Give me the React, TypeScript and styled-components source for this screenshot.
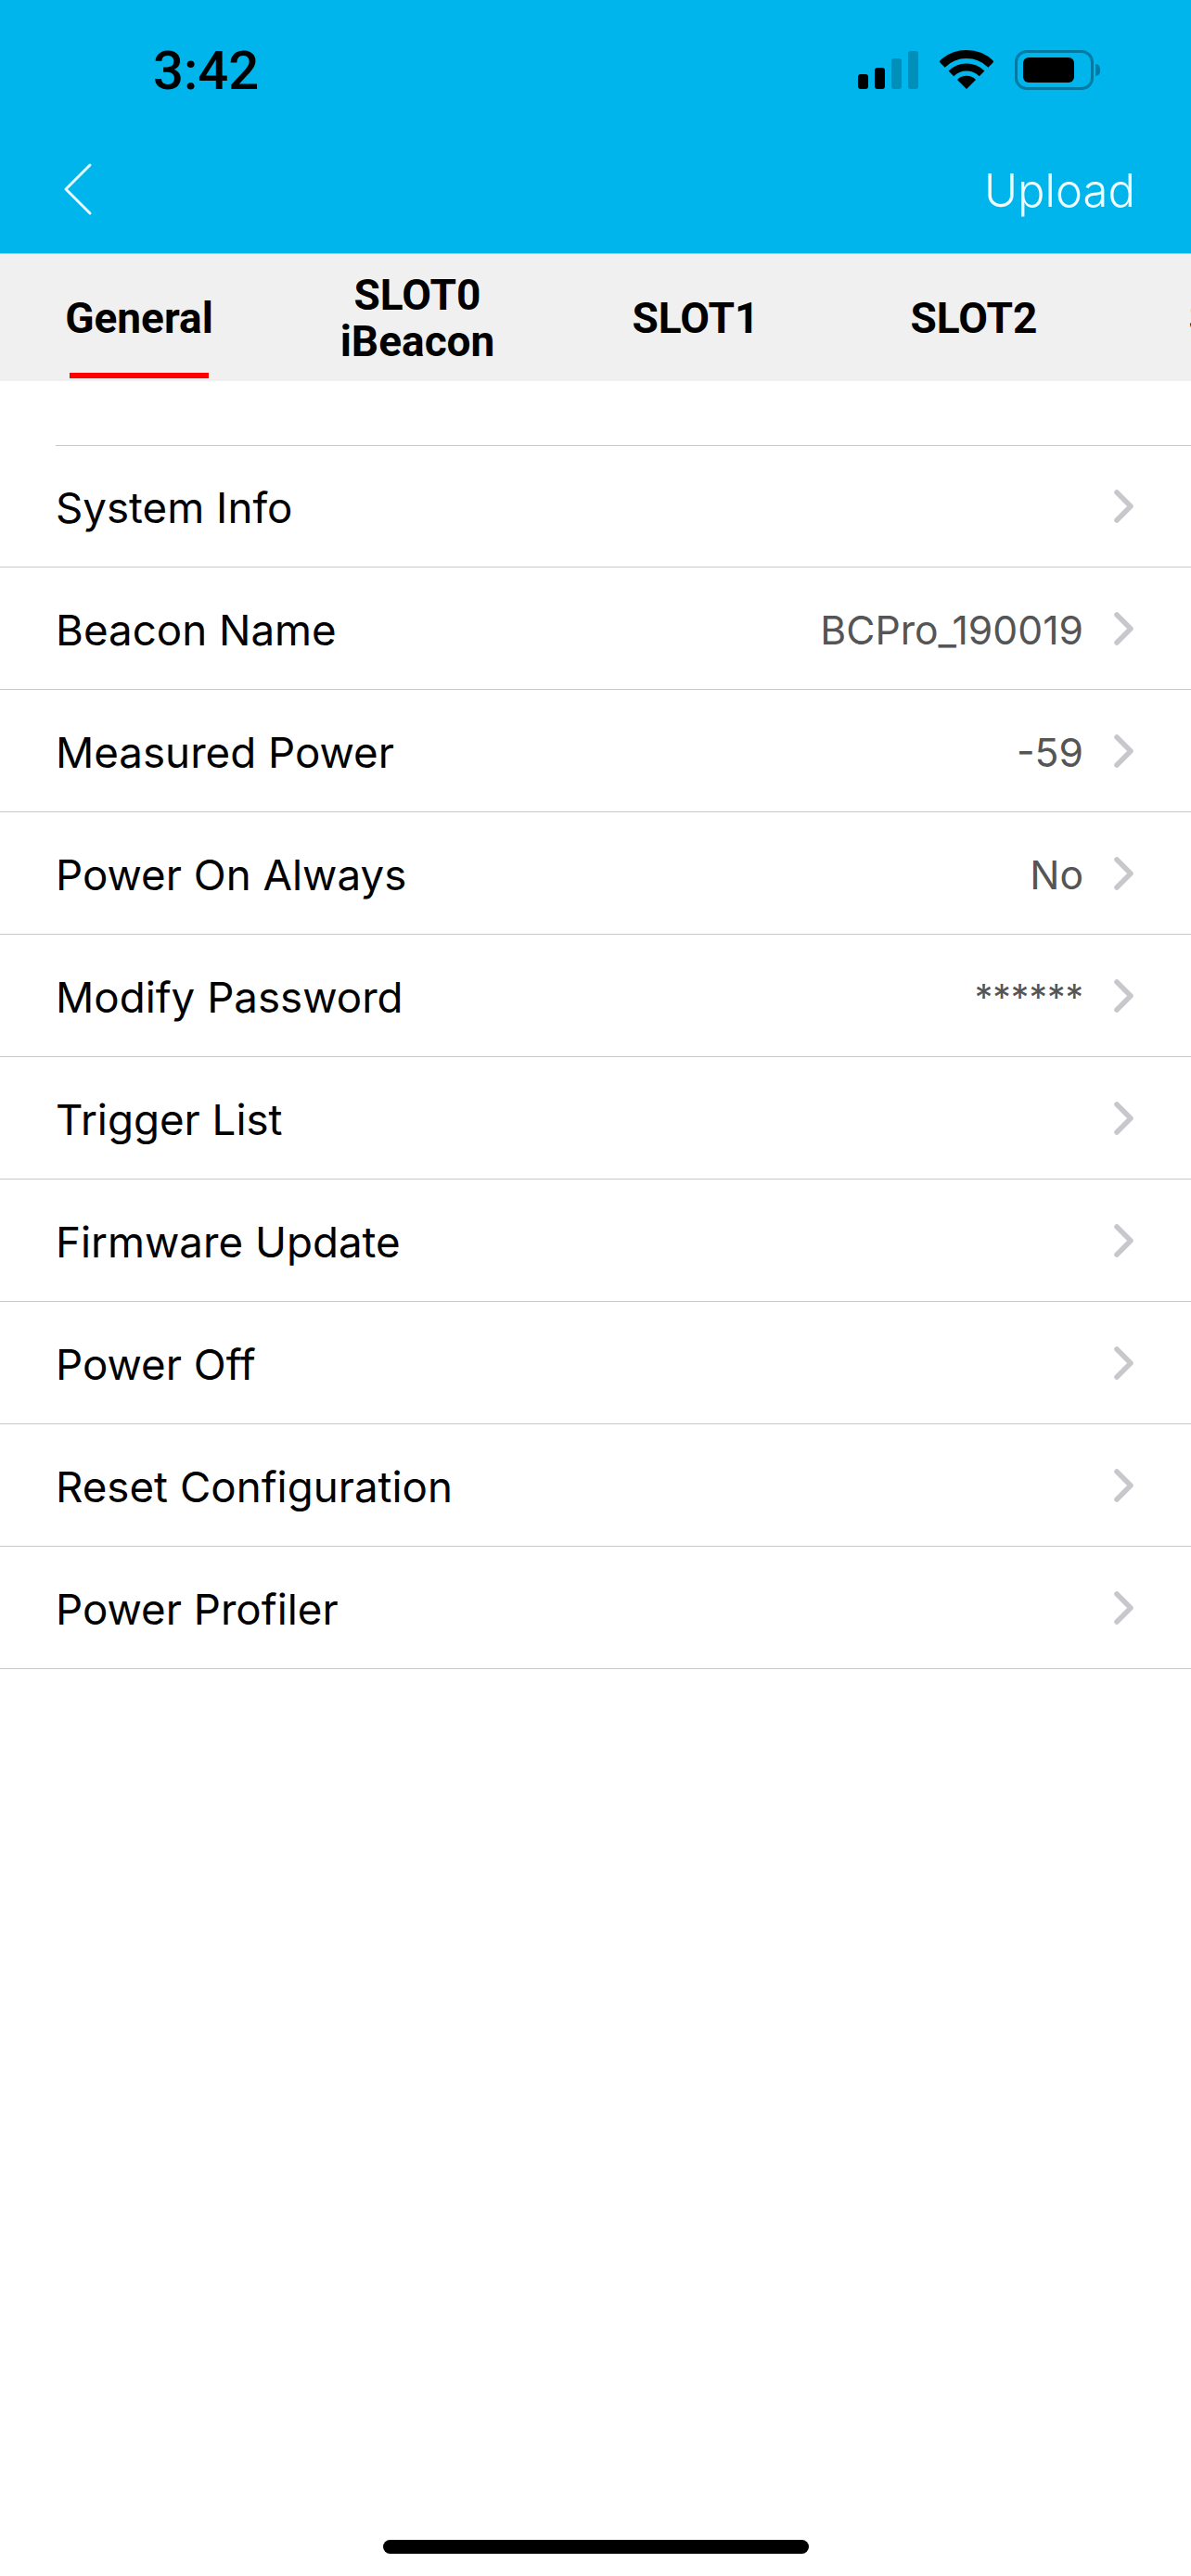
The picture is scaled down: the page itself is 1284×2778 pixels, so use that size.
import React from "react";
import styled, { createGlobalStyle } from "styled-components";

type TRow = {
  label: string;
  value?: string;
};

const TABS = ["General", "SLOT0\niBeacon", "SLOT1", "SLOT2", "SLOT3"];

const ROWS: TRow[] = [
  { label: "System Info" },
  { label: "Beacon Name", value: "BCPro_190019" },
  { label: "Measured Power", value: "-59" },
  { label: "Power On Always", value: "No" },
  { label: "Modify Password", value: "******" },
  { label: "Trigger List" },
  { label: "Firmware Update" },
  { label: "Power Off" },
  { label: "Reset Configuration" },
  { label: "Power Profiler" },
];

const App = (): JSX.Element => {
  return (
    <Page>
      <GlobalStyle />
      <Header>
        <StatusBar>
          <Clock>3:42</Clock>
          <StatusIcons>
            <Signal>
              <SignalBar $height={16} $on />
              <SignalBar $height={23} $on />
              <SignalBar $height={33} />
              <SignalBar $height={41} />
            </Signal>
            <svg width="58" height="42" viewBox="0 0 58 42">
              <path d="M2.5 15.5A37.5 37.5 0 0 1 55.5 15.5" fill="none" stroke="#000" strokeWidth="9" />
              <path d="M12.4 25.4A23.5 23.5 0 0 1 45.6 25.4" fill="none" stroke="#000" strokeWidth="8" />
              <path d="M29 42L19 32A14 14 0 0 1 39 32Z" fill="#000" />
            </svg>
            <Battery>
              <BatteryFill />
            </Battery>
          </StatusIcons>
        </StatusBar>
        <NavBar>
          <svg width="32" height="58" viewBox="0 0 32 58">
            <polyline
              points="29,3 3,29 29,55"
              fill="none"
              stroke="#e8f8fd"
              strokeWidth="3"
              strokeLinecap="round"
              strokeLinejoin="round"
            />
          </svg>
          <NavAction>Upload</NavAction>
        </NavBar>
      </Header>

      <TabBar>
        {TABS.map((tab, i) => (
          <Tab key={tab} $active={i === 0}>
            {tab}
          </Tab>
        ))}
      </TabBar>

      <List>
        {ROWS.map((row) => (
          <Row key={row.label}>
            <RowLabel>{row.label}</RowLabel>
            {row.value && <RowValue $masked={row.value.startsWith("*")}>{row.value}</RowValue>}
            <svg width="24" height="38" viewBox="0 0 24 38">
              <polyline
                points="4,4 19,19 4,34"
                fill="none"
                stroke="#c7c7cc"
                strokeWidth="5.5"
                strokeLinecap="round"
                strokeLinejoin="round"
              />
            </svg>
          </Row>
        ))}
      </List>

      <HomeIndicator />
    </Page>
  );
};

const GlobalStyle = createGlobalStyle`
  body {
    margin: 0;
    background: #fff;
    font-family: Inter, "Liberation Sans", sans-serif;
  }
`;

const Page = styled.div`
  display: flex;
  flex-direction: column;
  width: 1284px;
  height: 2778px;
  overflow: hidden;
  background: #fff;
`;

const Header = styled.header`
  height: 274px;
  box-sizing: border-box;
  background: #00b5ec;
  border-bottom: 1px solid #8fd4ea;
`;

const StatusBar = styled.div`
  display: flex;
  justify-content: space-between;
  align-items: flex-start;
  height: 135px;
  padding: 54px 105px 0 165px;
  box-sizing: border-box;
`;

const Clock = styled.div`
  font-family: Roboto, sans-serif;
  font-size: 58px;
  line-height: 44px;
  font-weight: 500;
  color: #000;
`;

const StatusIcons = styled.div`
  display: flex;
  align-items: flex-start;
  gap: 23px;
`;

const Signal = styled.div`
  display: flex;
  align-items: flex-end;
  gap: 7px;
  height: 42px;
`;

const SignalBar = styled.div<{ $height: number; $on?: boolean }>`
  width: 11px;
  height: ${(p) => p.$height}px;
  border-radius: 3px;
  background: ${(p) => (p.$on ? "#000" : "#008fbb")};
`;

const Battery = styled.div`
  position: relative;
  width: 85px;
  height: 43px;
  box-sizing: border-box;
  padding: 5px 6px;
  border: 3px solid #007ba3;
  border-radius: 13px;

  &::after {
    content: "";
    position: absolute;
    top: 12px;
    right: -10px;
    width: 5px;
    height: 13px;
    background: #007ba3;
    border-radius: 0 6px 6px 0;
  }
`;

const BatteryFill = styled.div`
  width: 55px;
  height: 100%;
  background: #000;
  border-radius: 6px;
`;

const NavBar = styled.div`
  display: flex;
  justify-content: space-between;
  align-items: center;
  height: 138px;
  padding: 0 60px 0 68px;
  box-sizing: border-box;
`;

const NavAction = styled.div`
  padding-top: 3px;
  font-size: 49px;
  font-weight: 300;
  color: #f0fbfe;
`;

const TabBar = styled.div`
  display: flex;
  flex: none;
  height: 137px;
  background: #f0f0f0;
  overflow: hidden;
`;

const Tab = styled.div<{ $active?: boolean }>`
  display: flex;
  flex: none;
  align-items: center;
  justify-content: center;
  position: relative;
  width: 300px;
  white-space: pre-line;
  text-align: center;
  font-family: Roboto, sans-serif;
  font-size: 46px;
  line-height: 50px;
  font-weight: 700;
  color: #000;

  &::after {
    content: "";
    display: ${(p) => (p.$active ? "block" : "none")};
    position: absolute;
    left: 75px;
    right: 75px;
    bottom: 3px;
    height: 6px;
    background: #f00;
  }
`;

const List = styled.div`
  margin-top: 69px;
  position: relative;

  &::before {
    content: "";
    position: absolute;
    top: 0;
    left: 60px;
    right: 0;
    height: 1px;
    background: #c8c8c8;
  }
`;

const Row = styled.div`
  display: flex;
  align-items: center;
  height: 132px;
  padding: 0 60px;
  box-sizing: border-box;
  border-bottom: 1px solid #c8c8c8;
`;

const RowLabel = styled.div`
  flex: 1;
  padding-top: 3px;
  font-size: 45.7px;
  color: #000;
`;

const RowValue = styled.div<{ $masked?: boolean }>`
  margin-right: 32px;
  padding-top: 3px;
  font-size: ${(p) => (p.$masked ? 39 : 42.7)}px;
  color: #555;
`;

const HomeIndicator = styled.div`
  width: 459px;
  height: 15px;
  margin: auto auto 24px;
  background: #000;
  border-radius: 8px;
`;

export default App;
